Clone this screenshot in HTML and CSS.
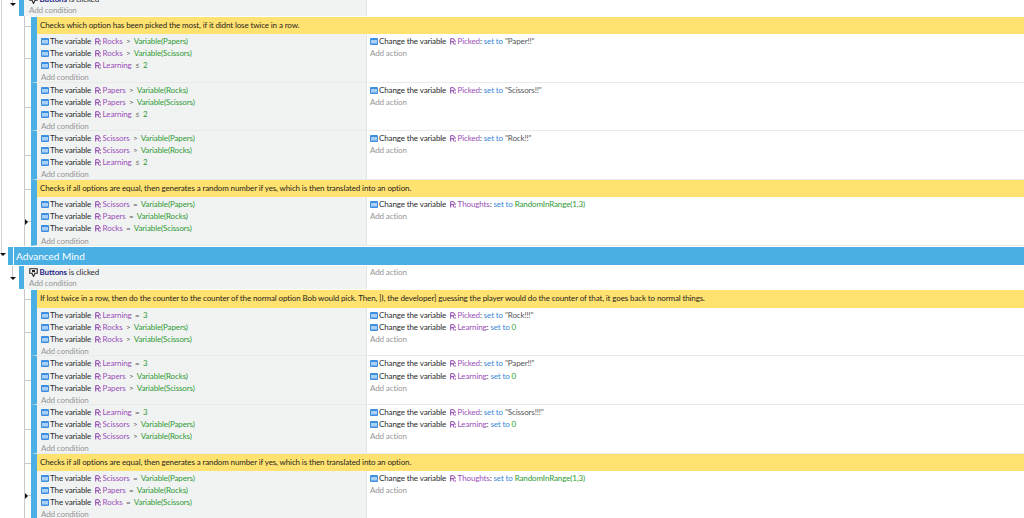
FILE: index.html
```html
<!DOCTYPE html>
<html lang="en">
<head>
<meta charset="utf-8">
<title>Events</title>
<link rel="stylesheet" href="styles.css">
</head>
<body>
<svg class="defs" width="0" height="0" aria-hidden="true">
  <symbol id="i-var" viewBox="0 0 8 7"><rect width="8" height="7" rx="1" fill="#3f8fe0"/><rect x="1" y="2" width="6" height="3.5" fill="#a9d0f5"/></symbol>
  <symbol id="i-scene" viewBox="0 0 6 7"><path d="M.7 6.5V.7h2.4q1.3 0 1.3 1.5T3.1 3.7H.7M2.8 3.7l1.4 2.8" fill="none" stroke="#8e44ad" stroke-width="1"/><rect x="4.8" y="2.6" width="1.1" height="1.1" fill="#8e44ad"/><rect x="4.8" y="5.4" width="1.1" height="1.1" fill="#8e44ad"/></symbol>
  <symbol id="i-obj" viewBox="0 0 9 9"><path d="M.8.8h7.4v4.4H6L4.5 8.4 3 5.2H.8z" fill="#fff" stroke="#222" stroke-width="1.1"/><rect x="3" y="2" width="3" height="2.2" fill="#222"/></symbol>
</svg>
<main class="sheet">
  <section class="group first">
    <span class="fold section"></span>
    <div class="event clipped">
      <span class="fold down"></span>
      <div class="conds"><div class="line"><svg class="ico-obj"><use href="#i-obj"/></svg><b class="obj">Buttons</b> is clicked</div><div class="add">Add condition</div></div>
      <div class="acts"></div>
    </div>
    <div class="children">
      <div class="comment">Checks which option has been picked the most, if it didnt lose twice in a row.</div>
      <div class="row">
        <div class="conds">
          <div class="line"><svg class="ico"><use href="#i-var"/></svg>The variable <svg class="sv"><use href="#i-scene"/></svg><span class="v">Rocks</span> <span class="op">&gt;</span> <span class="g">Variable(Papers)</span></div>
          <div class="line"><svg class="ico"><use href="#i-var"/></svg>The variable <svg class="sv"><use href="#i-scene"/></svg><span class="v">Rocks</span> <span class="op">&gt;</span> <span class="g">Variable(Scissors)</span></div>
          <div class="line"><svg class="ico"><use href="#i-var"/></svg>The variable <svg class="sv"><use href="#i-scene"/></svg><span class="v">Learning</span> <span class="op">≤</span> <span class="g">2</span></div>
          <div class="add">Add condition</div>
        </div>
        <div class="acts">
          <div class="line"><svg class="ico"><use href="#i-var"/></svg>Change the variable <svg class="sv"><use href="#i-scene"/></svg><span class="v">Picked</span>: <span class="b">set to</span> <span class="s">"Paper!!"</span></div>
          <div class="add">Add action</div>
        </div>
      </div>
      <div class="row">
        <div class="conds">
          <div class="line"><svg class="ico"><use href="#i-var"/></svg>The variable <svg class="sv"><use href="#i-scene"/></svg><span class="v">Papers</span> <span class="op">&gt;</span> <span class="g">Variable(Rocks)</span></div>
          <div class="line"><svg class="ico"><use href="#i-var"/></svg>The variable <svg class="sv"><use href="#i-scene"/></svg><span class="v">Papers</span> <span class="op">&gt;</span> <span class="g">Variable(Scissors)</span></div>
          <div class="line"><svg class="ico"><use href="#i-var"/></svg>The variable <svg class="sv"><use href="#i-scene"/></svg><span class="v">Learning</span> <span class="op">≤</span> <span class="g">2</span></div>
          <div class="add">Add condition</div>
        </div>
        <div class="acts">
          <div class="line"><svg class="ico"><use href="#i-var"/></svg>Change the variable <svg class="sv"><use href="#i-scene"/></svg><span class="v">Picked</span>: <span class="b">set to</span> <span class="s">"Scissors!!"</span></div>
          <div class="add">Add action</div>
        </div>
      </div>
      <div class="row">
        <div class="conds">
          <div class="line"><svg class="ico"><use href="#i-var"/></svg>The variable <svg class="sv"><use href="#i-scene"/></svg><span class="v">Scissors</span> <span class="op">&gt;</span> <span class="g">Variable(Papers)</span></div>
          <div class="line"><svg class="ico"><use href="#i-var"/></svg>The variable <svg class="sv"><use href="#i-scene"/></svg><span class="v">Scissors</span> <span class="op">&gt;</span> <span class="g">Variable(Rocks)</span></div>
          <div class="line"><svg class="ico"><use href="#i-var"/></svg>The variable <svg class="sv"><use href="#i-scene"/></svg><span class="v">Learning</span> <span class="op">≤</span> <span class="g">2</span></div>
          <div class="add">Add condition</div>
        </div>
        <div class="acts">
          <div class="line"><svg class="ico"><use href="#i-var"/></svg>Change the variable <svg class="sv"><use href="#i-scene"/></svg><span class="v">Picked</span>: <span class="b">set to</span> <span class="s">"Rock!!"</span></div>
          <div class="add">Add action</div>
        </div>
      </div>
      <div class="comment">Checks if all options are equal, then generates a random number if yes, which is then translated into an option.</div>
      <div class="row collapsed">
        <div class="conds">
          <div class="line"><svg class="ico"><use href="#i-var"/></svg>The variable <svg class="sv"><use href="#i-scene"/></svg><span class="v">Scissors</span> <span class="op">=</span> <span class="g">Variable(Papers)</span></div>
          <div class="line"><svg class="ico"><use href="#i-var"/></svg>The variable <svg class="sv"><use href="#i-scene"/></svg><span class="v">Papers</span> <span class="op">=</span> <span class="g">Variable(Rocks)</span></div>
          <div class="line"><svg class="ico"><use href="#i-var"/></svg>The variable <svg class="sv"><use href="#i-scene"/></svg><span class="v">Rocks</span> <span class="op">=</span> <span class="g">Variable(Scissors)</span></div>
          <div class="add">Add condition</div>
        </div>
        <div class="acts">
          <div class="line"><svg class="ico"><use href="#i-var"/></svg>Change the variable <svg class="sv"><use href="#i-scene"/></svg><span class="v">Thoughts</span>: <span class="b">set to</span> <span class="g">RandomInRange(1,3)</span></div>
          <div class="add">Add action</div>
        </div>
      </div>
    </div>
  </section>
  <section class="group">
    <h2 class="heading">Advanced Mind</h2>
    <div class="event">
      <span class="fold down"></span>
      <div class="conds"><div class="line"><svg class="ico-obj"><use href="#i-obj"/></svg><b class="obj">Buttons</b> is clicked</div><div class="add">Add condition</div></div>
      <div class="acts"><div class="add">Add action</div></div>
    </div>
    <div class="children">
      <div class="comment">If lost twice in a row, then do the counter to the counter of the normal option Bob would pick. Then, [I, the developer] guessing the player would do the counter of that, it goes back to normal things.</div>
      <div class="row">
        <div class="conds">
          <div class="line"><svg class="ico"><use href="#i-var"/></svg>The variable <svg class="sv"><use href="#i-scene"/></svg><span class="v">Learning</span> <span class="op">=</span> <span class="g">3</span></div>
          <div class="line"><svg class="ico"><use href="#i-var"/></svg>The variable <svg class="sv"><use href="#i-scene"/></svg><span class="v">Rocks</span> <span class="op">&gt;</span> <span class="g">Variable(Papers)</span></div>
          <div class="line"><svg class="ico"><use href="#i-var"/></svg>The variable <svg class="sv"><use href="#i-scene"/></svg><span class="v">Rocks</span> <span class="op">&gt;</span> <span class="g">Variable(Scissors)</span></div>
          <div class="add">Add condition</div>
        </div>
        <div class="acts">
          <div class="line"><svg class="ico"><use href="#i-var"/></svg>Change the variable <svg class="sv"><use href="#i-scene"/></svg><span class="v">Picked</span>: <span class="b">set to</span> <span class="s">"Rock!!!"</span></div>
          <div class="line"><svg class="ico"><use href="#i-var"/></svg>Change the variable <svg class="sv"><use href="#i-scene"/></svg><span class="v">Learning</span>: <span class="b">set to</span> <span class="g">0</span></div>
          <div class="add">Add action</div>
        </div>
      </div>
      <div class="row">
        <div class="conds">
          <div class="line"><svg class="ico"><use href="#i-var"/></svg>The variable <svg class="sv"><use href="#i-scene"/></svg><span class="v">Learning</span> <span class="op">=</span> <span class="g">3</span></div>
          <div class="line"><svg class="ico"><use href="#i-var"/></svg>The variable <svg class="sv"><use href="#i-scene"/></svg><span class="v">Papers</span> <span class="op">&gt;</span> <span class="g">Variable(Rocks)</span></div>
          <div class="line"><svg class="ico"><use href="#i-var"/></svg>The variable <svg class="sv"><use href="#i-scene"/></svg><span class="v">Papers</span> <span class="op">&gt;</span> <span class="g">Variable(Scissors)</span></div>
          <div class="add">Add condition</div>
        </div>
        <div class="acts">
          <div class="line"><svg class="ico"><use href="#i-var"/></svg>Change the variable <svg class="sv"><use href="#i-scene"/></svg><span class="v">Picked</span>: <span class="b">set to</span> <span class="s">"Paper!!"</span></div>
          <div class="line"><svg class="ico"><use href="#i-var"/></svg>Change the variable <svg class="sv"><use href="#i-scene"/></svg><span class="v">Learning</span>: <span class="b">set to</span> <span class="g">0</span></div>
          <div class="add">Add action</div>
        </div>
      </div>
      <div class="row">
        <div class="conds">
          <div class="line"><svg class="ico"><use href="#i-var"/></svg>The variable <svg class="sv"><use href="#i-scene"/></svg><span class="v">Learning</span> <span class="op">=</span> <span class="g">3</span></div>
          <div class="line"><svg class="ico"><use href="#i-var"/></svg>The variable <svg class="sv"><use href="#i-scene"/></svg><span class="v">Scissors</span> <span class="op">&gt;</span> <span class="g">Variable(Papers)</span></div>
          <div class="line"><svg class="ico"><use href="#i-var"/></svg>The variable <svg class="sv"><use href="#i-scene"/></svg><span class="v">Scissors</span> <span class="op">&gt;</span> <span class="g">Variable(Rocks)</span></div>
          <div class="add">Add condition</div>
        </div>
        <div class="acts">
          <div class="line"><svg class="ico"><use href="#i-var"/></svg>Change the variable <svg class="sv"><use href="#i-scene"/></svg><span class="v">Picked</span>: <span class="b">set to</span> <span class="s">"Scissors!!!"</span></div>
          <div class="line"><svg class="ico"><use href="#i-var"/></svg>Change the variable <svg class="sv"><use href="#i-scene"/></svg><span class="v">Learning</span>: <span class="b">set to</span> <span class="g">0</span></div>
          <div class="add">Add action</div>
        </div>
      </div>
      <div class="comment">Checks if all options are equal, then generates a random number if yes, which is then translated into an option.</div>
      <div class="row collapsed">
        <div class="conds">
          <div class="line"><svg class="ico"><use href="#i-var"/></svg>The variable <svg class="sv"><use href="#i-scene"/></svg><span class="v">Scissors</span> <span class="op">=</span> <span class="g">Variable(Papers)</span></div>
          <div class="line"><svg class="ico"><use href="#i-var"/></svg>The variable <svg class="sv"><use href="#i-scene"/></svg><span class="v">Papers</span> <span class="op">=</span> <span class="g">Variable(Rocks)</span></div>
          <div class="line"><svg class="ico"><use href="#i-var"/></svg>The variable <svg class="sv"><use href="#i-scene"/></svg><span class="v">Rocks</span> <span class="op">=</span> <span class="g">Variable(Scissors)</span></div>
          <div class="add">Add condition</div>
        </div>
        <div class="acts">
          <div class="line"><svg class="ico"><use href="#i-var"/></svg>Change the variable <svg class="sv"><use href="#i-scene"/></svg><span class="v">Thoughts</span>: <span class="b">set to</span> <span class="g">RandomInRange(1,3)</span></div>
          <div class="add">Add action</div>
        </div>
      </div>
    </div>
  </section>
</main>
</body>
</html>
```
FILE: styles.css
```css
* { box-sizing: border-box; }
html, body { margin: 0; padding: 0; background: #fff; }
body { width: 1024px; height: 518px; overflow: hidden; }
.defs { position: absolute; }
.sheet {
  height: 518px;
  overflow: hidden;
  font-family: "Lato", "Open Sans", sans-serif;
  font-size: 8px;
  letter-spacing: -0.12px;
  line-height: 12.1px;
  color: #2b2b2b;
  white-space: nowrap;
}
.group { position: relative; }
.group.first::before { content: ""; position: absolute; left: 1px; top: 0; bottom: -10px; width: 1px; background: #d5d5d5; }
.fold.section {
  position: absolute; left: 0; bottom: -10.5px;
  width: 0; height: 0;
  border-left: 3.5px solid transparent; border-right: 3.5px solid transparent; border-top: 3px solid #111;
}
.event {
  position: relative;
  display: flex;
  margin-left: 19px;
  height: 23.5px;
  border-left: 5px solid #4ab0e4;
}
.event::before { content: ""; position: absolute; left: -12px; top: 0; width: 1px; height: 13px; background: #c9c9c9; }
.event.clipped { height: 15.5px; align-items: flex-end; }
.event.clipped::before { height: 4px; }
.event.clipped .conds { height: 24.5px; flex-shrink: 0; padding-top: 2px; }
.event .conds { width: 343px; padding-left: 5px; background: #f1f3f3; border-right: 1px solid #e2e4e4; }
.event .add { line-height: 10px; }
.event .acts { flex: 1; padding-left: 3px; }
.event .acts .add { line-height: 12.1px; }
.event.clipped .acts { height: 15.5px; }
.line { height: 12.1px; white-space: pre; }
.add { color: #969696; height: 12.1px; }
.fold.down {
  position: absolute; left: -14px; top: 11px;
  width: 0; height: 0;
  border-left: 3px solid transparent; border-right: 3px solid transparent; border-top: 3px solid #111;
}
.clipped .fold.down { top: 3px; }
.children {
  position: relative;
  margin-left: 24px;
  padding-left: 6px;
  padding-top: 1px;
  border-left: 1px solid #c9c9c9;
}
.comment {
  position: relative;
  height: 17.5px;
  line-height: 17.5px;
  padding-left: 3px;
  background: #ffe26f;
  color: #1f1f1f;
  box-shadow: -6px 0 0 #4ab0e4;
  margin-left: 6px;
}
.comment::before { content: ""; position: absolute; left: -12px; top: 9px; width: 6px; height: 1px; background: #c9c9c9; }
.row {
  position: relative;
  display: flex;
  height: 48.6px;
  border-left: 6px solid #4ab0e4;
  border-bottom: 1.5px solid #e9ebeb;
}
.row::before { content: ""; position: absolute; left: -12px; top: 24px; width: 6px; height: 1px; background: #c9c9c9; }
.row.collapsed::after {
  content: ""; position: absolute; left: -12px; top: 21.5px; width: 0; height: 0;
  border-top: 3px solid transparent; border-bottom: 3px solid transparent; border-left: 3px solid #111;
}
.row .conds { width: 330px; padding: 1px 0 0 4px; background: #f1f3f3; border-right: 1px solid #e2e4e4; }
.row .acts { flex: 1; padding: 1px 0 0 3px; }
.heading {
  margin: 1px 0 1px 14px;
  height: 18px;
  padding-left: 2px;
  font-size: 10px;
  font-weight: 400;
  letter-spacing: 0;
  line-height: 18px;
  color: #fff;
  background: #4ab0e4;
  box-shadow: -1px 0 0 #fff, -6px 0 0 #4ab0e4;
}
.ico { width: 8px; height: 7px; margin-right: 1px; vertical-align: -1px; }
.ico-obj { width: 9px; height: 9px; margin-right: 1.5px; vertical-align: -2px; }
.sv { width: 6px; height: 7px; margin: 0 2px 0 1.5px; vertical-align: -1px; }
.v { color: #9b4fb8; }
.g { color: #2f9a33; }
.b { color: #3a86d8; }
.s { color: #555; }
.op { color: #555; margin: 0 1.5px; }
.obj { color: #232384; font-weight: 700; }
```
